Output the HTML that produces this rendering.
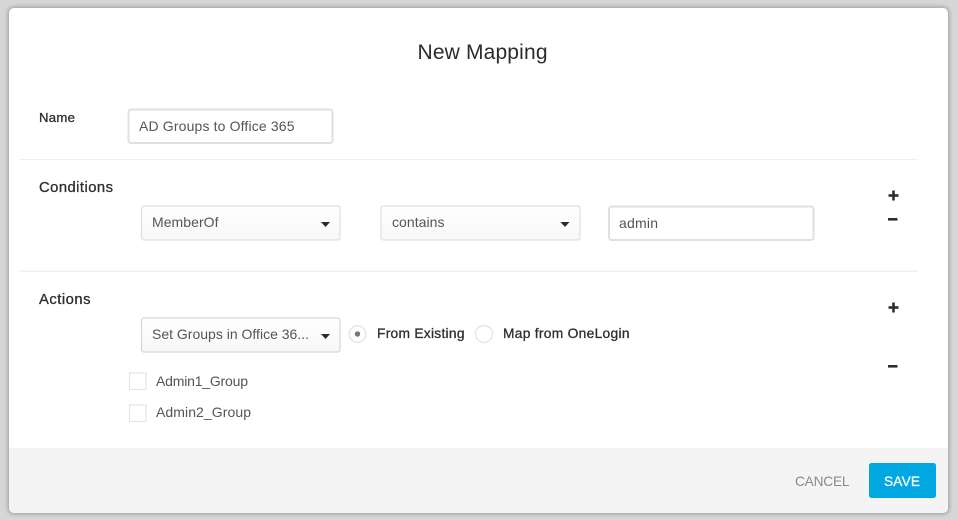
<!DOCTYPE html>
<html><head><meta charset="utf-8">
<style>
html,body{margin:0;padding:0;width:958px;height:520px;overflow:hidden;background:#d6d6d6}
.m{position:absolute;left:9px;top:8px;width:939px;height:505px;background:#fff;border-radius:5px;overflow:hidden;box-shadow:0 0 4px 1px rgba(0,0,0,.28)}
.f{position:absolute;left:0;top:440px;width:939px;height:65px;background:#f4f4f4}
svg{position:absolute;left:0;top:0;filter:blur(.25px)}
text{font-family:"Liberation Sans",sans-serif}
</style></head>
<body>
<div class="m"><div class="f"></div></div>
<svg width="958" height="520" viewBox="0 0 958 520">
<defs><linearGradient id="g" x1="0" y1="0" x2="0" y2="1"><stop offset="0" stop-color="#fff"/><stop offset="1" stop-color="#f7f7f7"/></linearGradient></defs>
<rect x="19" y="159" width="899" height="1" fill="#efefef"/>
<rect x="19" y="270.500" width="899" height="1.500" fill="#f0f0f0"/>

<text x="417.500" y="59" font-size="21" fill="#2b2b2b" textLength="130" lengthAdjust="spacing">New Mapping</text>

<g fill="#2e2e2e" stroke="#2e2e2e" stroke-width=".3">
<text x="39" y="122" font-size="13.200" textLength="36">Name</text>
<text x="39" y="192" font-size="14.800" textLength="74">Conditions</text>
<text x="39" y="304" font-size="14.800" textLength="51.500">Actions</text>
<text x="377" y="338" font-size="13.800" textLength="87.500">From Existing</text>
<text x="503" y="338" font-size="13.800" textLength="126.500">Map from OneLogin</text>
</g>

<rect x="128.500" y="109.500" width="204" height="33.500" rx="2.500" fill="#fff" stroke="#e0e0e0" stroke-width="2"/>
<rect x="609" y="206.500" width="204.500" height="33.500" rx="2.500" fill="#fff" stroke="#e0e0e0" stroke-width="2"/>

<g fill="url(#g)" stroke="#e0e0e0" stroke-width="1.200">
<rect x="141.500" y="206" width="198.500" height="34" rx="2.500"/>
<rect x="381" y="206" width="199" height="34" rx="2.500"/>
</g>
<rect x="141.500" y="318" width="198.500" height="34" rx="2.500" fill="url(#g)" stroke="#d6d6d6" stroke-width="1.200"/>

<g fill="#555">
<text x="139" y="131" font-size="14" textLength="155.500">AD Groups to Office 365</text>
<text x="152" y="227" font-size="14" textLength="66.500">MemberOf</text>
<text x="392" y="227" font-size="14" textLength="52.500">contains</text>
<text x="619" y="228" font-size="14" textLength="39">admin</text>
<text x="152" y="339" font-size="14" textLength="157">Set Groups in Office 36...</text>
<text x="156" y="386" font-size="14" textLength="92">Admin1_Group</text>
<text x="156" y="417" font-size="14" textLength="95">Admin2_Group</text>
</g>

<g fill="#2a2a2a">
<path d="M321 222h9l-4.500 5z"/>
<path d="M560.500 222h9l-4.500 5z"/>
<path d="M321 334h9l-4.500 5z"/>
</g>

<circle cx="357.500" cy="334" r="8.300" fill="#fff" stroke="#e6e6e6" stroke-width="1.500"/>
<circle cx="357.500" cy="334" r="2.700" fill="#777"/>
<circle cx="484" cy="334" r="8.500" fill="#fff" stroke="#e6e6e6" stroke-width="1.500"/>

<rect x="129.500" y="373" width="16.500" height="16.500" fill="#fff" stroke="#e4e4e4" stroke-width="1.100"/>
<rect x="129.500" y="405" width="16.500" height="16.500" fill="#fff" stroke="#e4e4e4" stroke-width="1.100"/>

<g fill="#2e2e2e">
<rect x="888.500" y="194.200" width="10" height="2.600"/>
<rect x="892.200" y="190.500" width="2.600" height="10"/>
<rect x="888" y="218" width="9.500" height="2.600"/>
<rect x="888.500" y="306.200" width="10" height="2.600"/>
<rect x="892.200" y="302.500" width="2.600" height="10"/>
<rect x="888" y="365" width="9.500" height="2.600"/>
</g>

<text x="795" y="486" font-size="13.700" fill="#8a8a8a" textLength="54.500">CANCEL</text>
<rect x="869" y="463" width="67" height="35" rx="2.500" fill="#00a7e1"/>
<text x="884" y="486" font-size="13.700" fill="#fff" stroke="#fff" stroke-width=".3" textLength="36">SAVE</text>
</svg>
</body></html>
